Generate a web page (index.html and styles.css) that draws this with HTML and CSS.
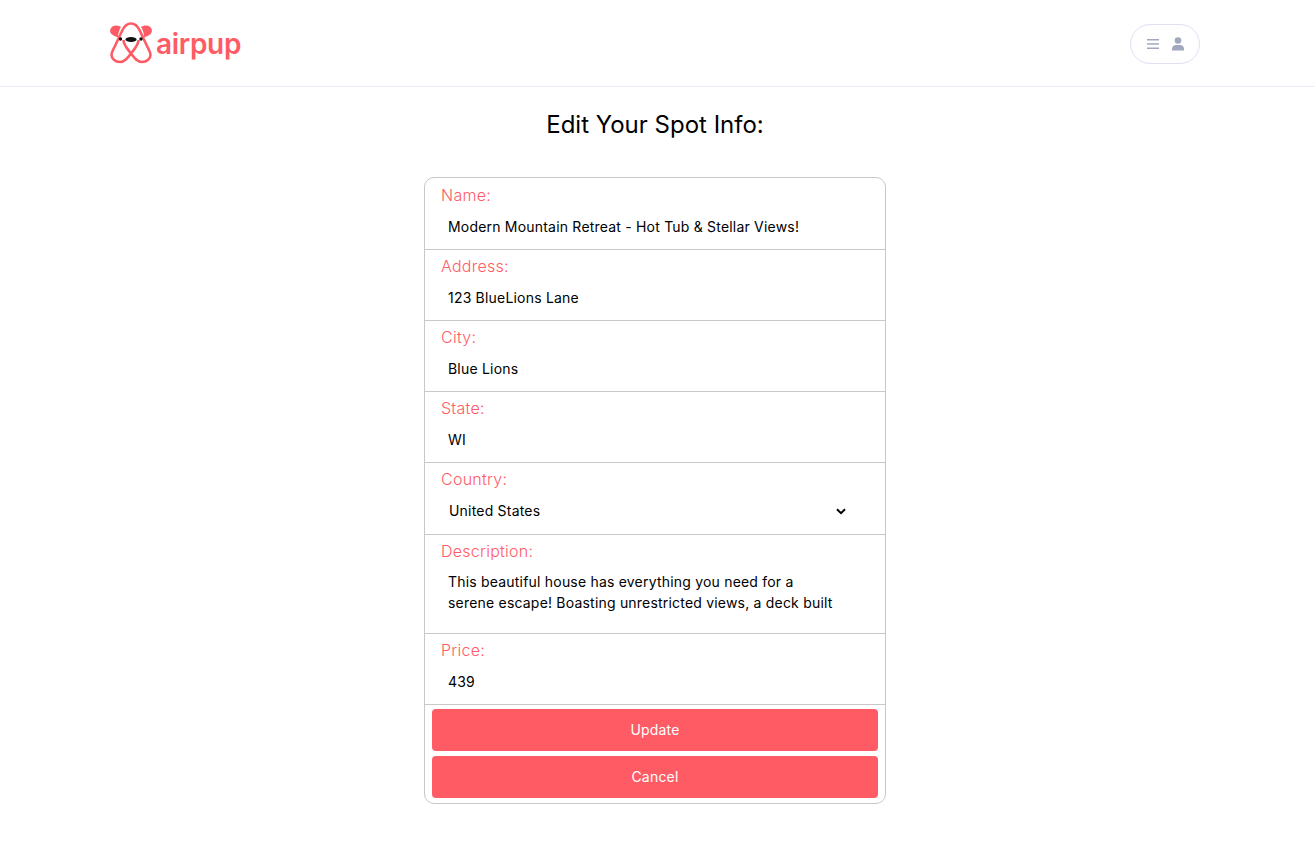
FILE: index.html
```html
<!DOCTYPE html>
<html lang="en">
<head>
  <meta charset="UTF-8">
  <title>airpup - Edit Spot</title>
  <link rel="stylesheet" href="styles.css">
</head>
<body>

  <header class="navbar">
    <a class="logo" href="#">
      <svg class="logo-mark" width="42" height="42" viewBox="0 0 42 42" fill="none">
        <!-- ears -->
        <path d="M11 5C7 2.500 1.500 3 .3 7.500C-.8 11.500 3 14 8 15.500C8 11.500 9 8 11 5z" fill="#ff5b65"/>
        <path d="M31 5C35 2.500 40.500 3 41.700 7.500C42.800 11.500 39 14 34 15.500C34 11.500 33 8 31 5z" fill="#ff5b65"/>
        <!-- head and crossed legs -->
        <path d="M28.500 18C28.500 23 24.500 27 21 31.500C18 35.500 15 40 10 40C5 40 1.500 36.500 1.500 33C1.500 30 3 28 5 24L12.500 8C14.500 4 18 1.500 21 1.500C24 1.500 27.500 4 29.500 8L37 24C39 28 40.500 30 40.500 33C40.500 36.500 37 40 32 40C27 40 24 35.500 21 31.500C17.500 27 13.500 23 13.500 18" stroke="#ff5b65" stroke-width="2.600"/>
        <!-- nose and eyes -->
        <ellipse cx="21" cy="17.500" rx="5.500" ry="2.600" fill="#111"/>
        <circle cx="10.500" cy="17" r="1.700" fill="#111"/>
        <circle cx="31" cy="17" r="1.700" fill="#111"/>
      </svg>
      <span class="logo-text">airpup</span>
    </a>
    <button class="user-menu" type="button">
      <svg width="12" height="12" viewBox="0 0 12 12" fill="#a0a8bd">
        <rect y="1" width="12" height="1.500"/>
        <rect y="5.200" width="12" height="1.500"/>
        <rect y="9.500" width="12" height="1.500"/>
      </svg>
      <svg width="12" height="14" viewBox="0 0 12 14" fill="#a0a8bd">
        <circle cx="6" cy="3.500" r="3.300"/>
        <path d="M0 13.500v-1.500c0-2.500 2-4 4-4h4c2 0 4 1.500 4 4v1.500z"/>
      </svg>
    </button>
  </header>

  <main class="page">
    <h1 class="page-title">Edit Your Spot Info:</h1>

    <form class="spot-form">
      <div class="form-row">
        <label class="form-label" for="name">Name:</label>
        <input class="form-input" id="name" type="text" value="Modern Mountain Retreat - Hot Tub &amp; Stellar Views!">
      </div>
      <div class="form-row">
        <label class="form-label" for="address">Address:</label>
        <input class="form-input" id="address" type="text" value="123 BlueLions Lane">
      </div>
      <div class="form-row">
        <label class="form-label" for="city">City:</label>
        <input class="form-input" id="city" type="text" value="Blue Lions">
      </div>
      <div class="form-row">
        <label class="form-label" for="state">State:</label>
        <input class="form-input" id="state" type="text" value="WI">
      </div>
      <div class="form-row">
        <label class="form-label" for="country">Country:</label>
        <select class="form-input form-select" id="country">
          <option>United States</option>
        </select>
        <svg class="select-arrow" width="10" height="7" viewBox="0 0 10 7" fill="none">
          <path d="M1 1.200l4 4 4-4" stroke="#000" stroke-width="2"/>
        </svg>
      </div>
      <div class="form-row">
        <label class="form-label" for="description">Description:</label>
        <textarea class="form-input form-textarea" id="description" rows="2">This beautiful house has everything you need for a serene escape! Boasting unrestricted views, a deck built</textarea>
      </div>
      <div class="form-row">
        <label class="form-label" for="price">Price:</label>
        <input class="form-input" id="price" type="text" value="439">
      </div>
      <div class="form-actions">
        <button class="form-btn" type="submit">Update</button>
        <button class="form-btn" type="button">Cancel</button>
      </div>
    </form>
  </main>

</body>
</html>
```

FILE: styles.css
```css
body {
  margin: 0;
  background-color: #fff;
  font-family: "Inter", "Liberation Sans", sans-serif;
  color: #000;
}

/* Navbar */
.navbar {
  display: flex;
  justify-content: space-between;
  align-items: center;
  height: 86px;
  padding: 0 114px 0 110px;
  border-bottom: 1px solid #ebebf3;
}
.logo {
  display: flex;
  align-items: center;
  gap: 4px;
  text-decoration: none;
}
.logo-text {
  margin-top: 2px;
  font-family: "Inter", sans-serif;
  font-size: 28px;
  font-weight: 600;
  color: #ff5b65;
  letter-spacing: -0.3px;
}
.user-menu {
  display: flex;
  align-items: center;
  justify-content: center;
  gap: 13px;
  width: 70px;
  height: 40px;
  margin-top: 1px;
  padding: 0;
  background: #fff;
  border: 1px solid #dfe1f2;
  border-radius: 20px;
}

/* Form */
.page {
  padding-right: 4px;
}
.page-title {
  margin: 22px 0 36px;
  font-size: 24px;
  line-height: 32px;
  font-weight: 400;
  text-align: center;
}
.spot-form {
  width: 460px;
  margin: 0 auto;
  padding-top: 1px;
  border: 1px solid #c8c8c8;
  border-radius: 10px;
}
.form-row {
  position: relative;
  padding: 6px 16px 0;
  border-bottom: 1px solid #c8c8c8;
}
.form-label {
  display: block;
  height: 21px;
  font-size: 16px;
  line-height: 21px;
  font-weight: 350;
  letter-spacing: 0.25px;
  color: #ff5b65;
}
.form-input {
  display: block;
  box-sizing: border-box;
  width: 100%;
  height: 43px;
  padding: 0 7px 3px;
  border: none;
  outline: none;
  background: transparent;
  font-family: inherit;
  font-size: 14px;
  letter-spacing: 0.2px;
  color: #000;
}
.form-select {
  height: 44px;
  padding-left: 8px;
  appearance: none;
}
.select-arrow {
  position: absolute;
  right: 39px;
  top: 45px;
}
.form-textarea {
  height: 71px;
  padding: 9px 29px 0 7px;
  line-height: 21px;
  resize: none;
  overflow: hidden;
}
.form-actions {
  display: flex;
  flex-direction: column;
  gap: 5px;
  padding: 4px 7px 5px;
}
.form-btn {
  height: 42px;
  padding: 0 0 2px;
  border: none;
  border-radius: 4px;
  background-color: #ff5b65;
  color: #fff;
  font-family: inherit;
  font-size: 14px;
  font-weight: 400;
  letter-spacing: 0.2px;
}
```
